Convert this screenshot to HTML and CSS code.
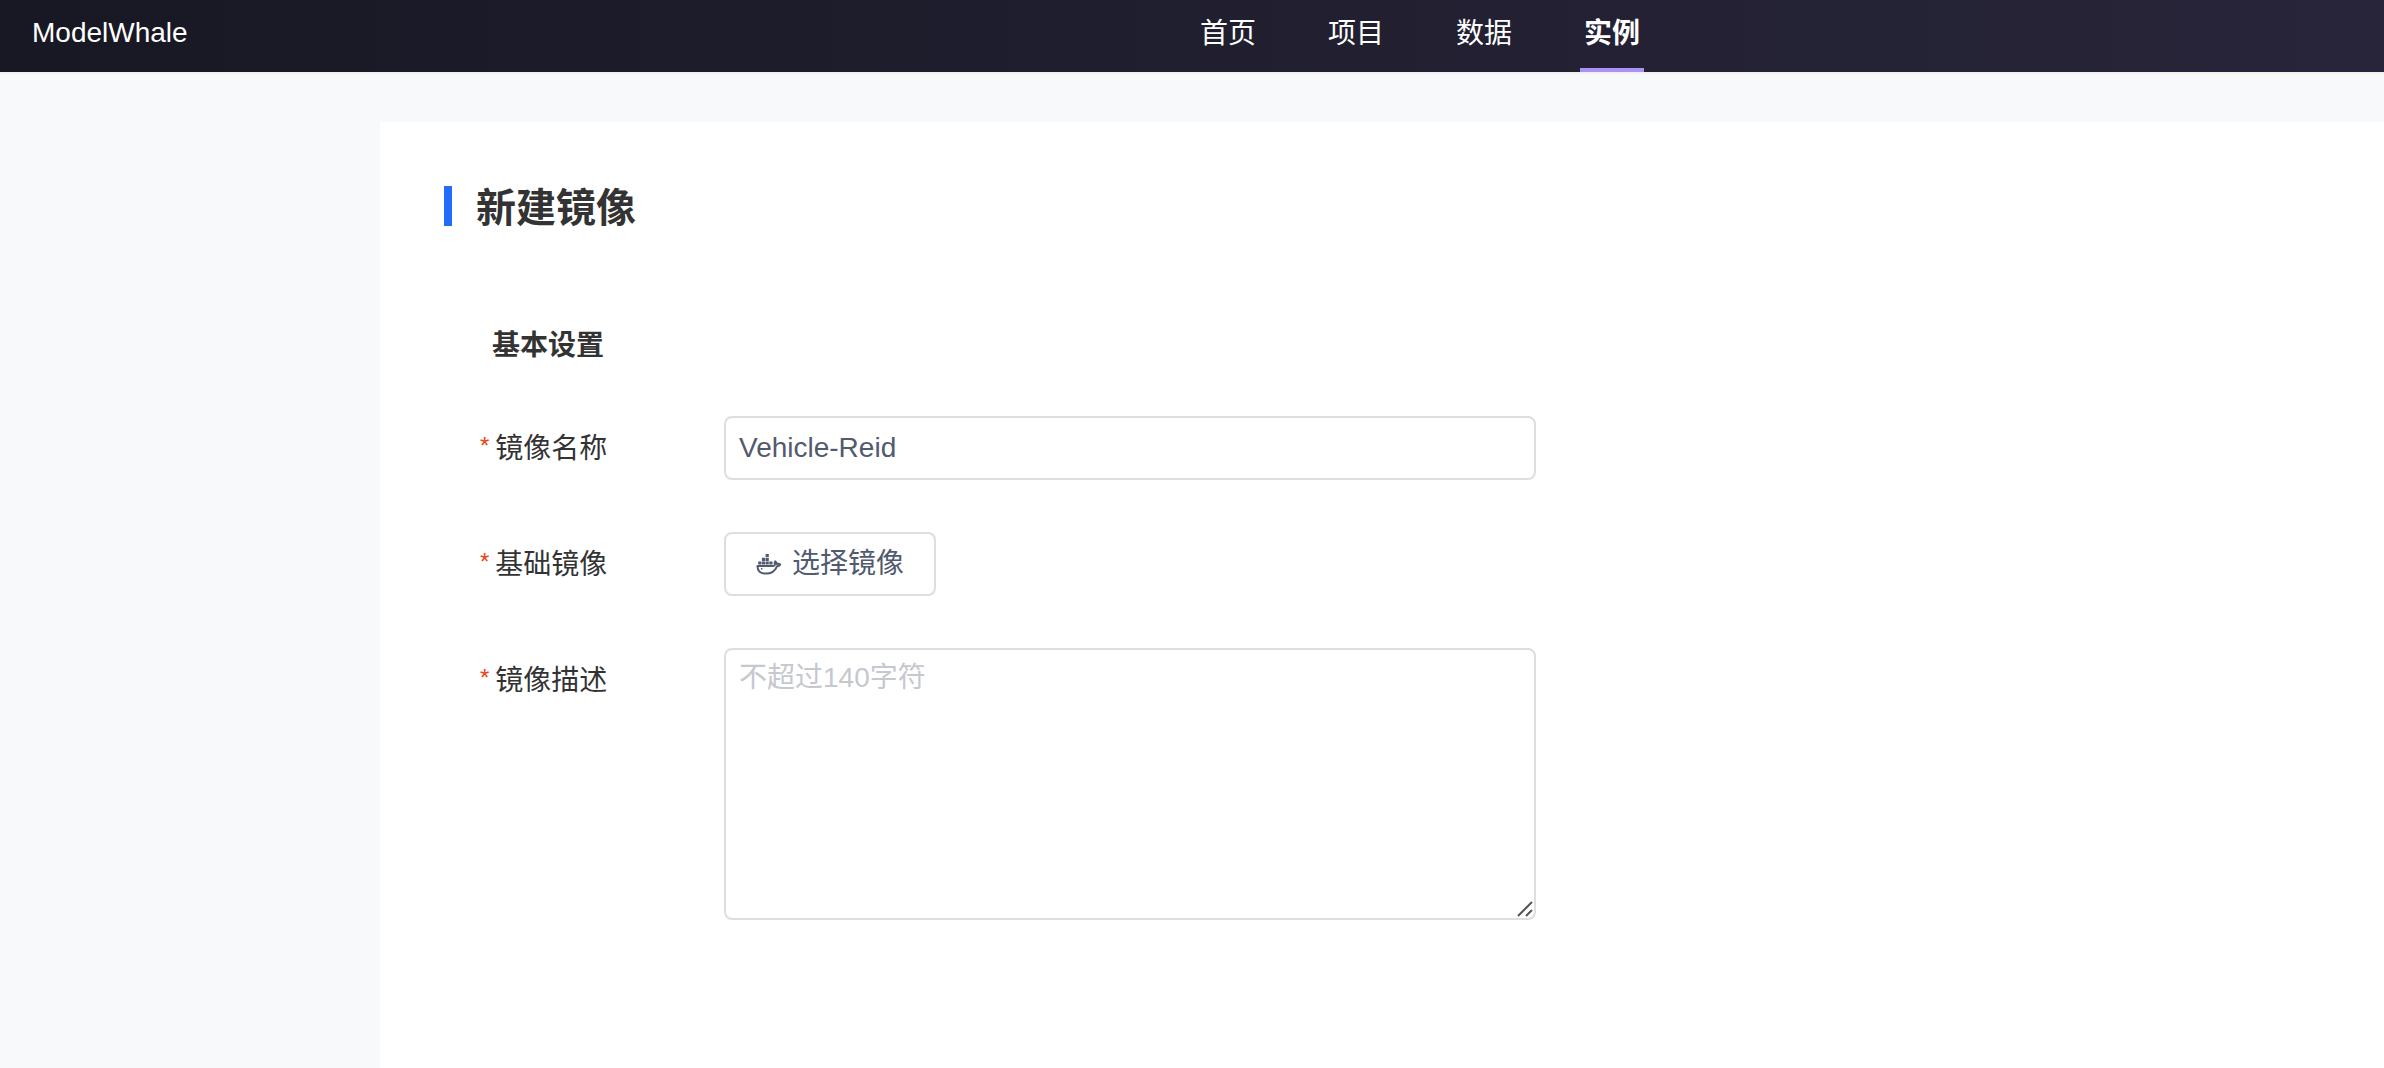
FILE: index.html
```html
<!DOCTYPE html>
<html lang="zh-CN">
  <head>
    <meta charset="utf-8">
    <meta name="viewport" content="width=device-width, initial-scale=1.0">
    <title>ModelWhale</title>
    <link rel="stylesheet" href="styles.css">
  </head>
  <body>
    <header class="header">
      <a class="brand" href="#">ModelWhale</a>
      <nav class="nav">
        <a href="#">首页</a>
        <a href="#">项目</a>
        <a href="#">数据</a>
        <a class="active" href="#">实例</a>
      </nav>
    </header>

    <main class="content">
      <h1 class="page-title">新建镜像</h1>

      <form class="image-form">
        <h2 class="section-title">基本设置</h2>

        <div class="form-item">
          <label class="required" for="imageName">镜像名称</label>
          <input class="control" type="text" id="imageName" name="imageName" value="Vehicle-Reid">
        </div>

        <div class="form-item">
          <label class="required" for="baseImage">基础镜像</label>
          <button class="select-button" type="button" id="baseImage">
            <svg class="docker-icon" viewBox="0 0 26 22" aria-hidden="true">
              <path class="boxes" d="M9.6 .9h3.2v3.2H9.6zM5.9 4.7h3.2v3.2H5.9zM9.6 4.7h3.2v3.2H9.6zM2.2 8.4h3.2v3.2H2.2zM5.9 8.4h3.2v3.2H5.9zM9.6 8.4h3.2v3.2H9.6zM13.3 8.4h3.2v3.2h-3.2z"/>
              <path class="hull" d="M1.5 12.9h15.2c1.5 0 2.3-.7 2.2-1.8-.4-1-.4-1.9.3-2.7 1 .6 1.5 1.4 1.6 2.6 1.3-.3 2.5-.1 3.4.5-.6 1.2-1.7 1.8-3.2 1.8-2.1 5-5.9 7.3-11.1 7.3-5.4 0-8.6-2.5-8.4-7.7z"/>
              <circle class="boxes" cx="5.7" cy="15.8" r=".9"/>
            </svg>
            选择镜像
          </button>
        </div>

        <div class="form-item">
          <label class="required" for="imageDesc">镜像描述</label>
          <div class="textarea-wrap">
            <textarea class="control" id="imageDesc" name="imageDesc" maxlength="140" placeholder="不超过140字符"></textarea>
            <svg class="resize-grip" viewBox="0 0 16 16" aria-hidden="true">
              <path d="M1 15L15 1M9 15l6-6"/>
            </svg>
          </div>
        </div>
      </form>
    </main>
  </body>
</html>
```

FILE: styles.css
```css
* {
  margin: 0;
  padding: 0;
  box-sizing: border-box;
}

body {
  display: flex;
  flex-direction: column;
  min-height: 100vh;
  font-family: "Liberation Sans", "Noto Sans CJK SC", sans-serif;
  font-size: 28px;
  line-height: 40px;
  color: #333;
  background: #f8f9fb;
}

/* 顶部导航 */
.header {
  display: grid;
  grid-template-columns: 1fr 1fr;
  border-bottom: 2px solid #f0f0f0;
  background: linear-gradient(90deg, #181824, #28253a) border-box;
  background-clip: padding-box;
}

.header a {
  color: #fff;
  text-decoration: none;
}

.brand {
  padding: 13px 32px 19px;
}

.nav {
  display: flex;
  gap: 64px;
  padding-left: 4px;
}

.nav a {
  padding: 14px 4px;
  border-bottom: 4px solid transparent;
}

.nav .active {
  font-weight: bold;
  border-bottom-color: #ab92f5;
}

/* 内容区 */
.content {
  flex: 1;
  margin: 48px 0 0 380px;
  padding: 64px;
  background: #fff;
}

.page-title {
  padding: 4px 0 0 24px;
  border-left: 8px solid #236bfa;
  font-size: 40px;
  line-height: 36px;
}

.section-title {
  margin: 0 12px 50px;
  font-size: 28px;
}

/* 表单 */
.image-form {
  max-width: 1092px;
  padding: 100px 0 0 36px;
}

.form-item {
  display: grid;
  grid-template-columns: 244px 1fr;
  align-items: start;
  margin-bottom: 52px;
}

.form-item label {
  display: flex;
  gap: 6px;
  height: 64px;
  line-height: 66px;
}

.required::before {
  content: "*";
  color: #ed4014;
  font-size: 24px;
  line-height: 60px;
}

.control {
  display: block;
  width: 100%;
  height: 64px;
  padding: 0 13px;
  border: 2px solid #dcdee2;
  border-radius: 8px;
  background: #fff;
  font: inherit;
  color: #515a6e;
}

.control::placeholder {
  color: #c5c8ce;
}

.textarea-wrap {
  position: relative;
}

textarea.control {
  height: 272px;
  padding: 8px 13px;
  resize: none;
}

.resize-grip {
  position: absolute;
  right: 3px;
  bottom: 3px;
  width: 16px;
  height: 16px;
  fill: none;
  stroke: #555;
  stroke-width: 2;
}

.select-button {
  display: flex;
  align-items: center;
  justify-self: start;
  gap: 10px;
  height: 64px;
  padding: 0 30px;
  border: 2px solid #dcdee2;
  border-radius: 8px;
  background: #fff;
  font: inherit;
  color: #515a6e;
  cursor: pointer;
}

.docker-icon {
  width: 26px;
  height: 22px;
}

.boxes {
  fill: currentColor;
}

.hull {
  fill: none;
  stroke: currentColor;
  stroke-width: 2;
  stroke-linejoin: round;
}
```
